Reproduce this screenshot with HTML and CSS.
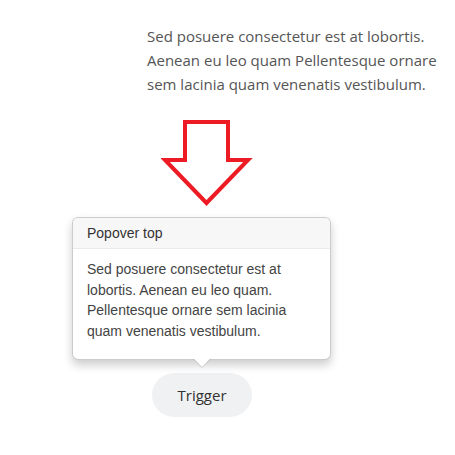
FILE: index.html
```html
<!DOCTYPE html>
<html lang="en">
<head>
    <meta charset="UTF-8">
    <meta name="viewport" content="width=device-width, initial-scale=1.0">
    <title>Popover top</title>
    <link rel="stylesheet" href="styles.css">
</head>
<body>
    <div class="page">
        <p class="intro">Sed posuere consectetur est at lobortis. Aenean eu leo quam Pellentesque ornare sem lacinia quam venenatis vestibulum.</p>

        <svg class="down-arrow" width="92" height="90" viewBox="0 0 92 90">
            <polygon points="24,4 67,4 67,42 87,42 45.5,85 4,42 24,42" fill="none" stroke="#ed1c24" stroke-width="4"/>
        </svg>

        <div class="popover">
            <div class="popover-title">Popover top</div>
            <div class="popover-content">Sed posuere consectetur est at lobortis. Aenean eu leo quam. Pellentesque ornare sem lacinia quam venenatis vestibulum.</div>
        </div>

        <button class="trigger">Trigger</button>
    </div>
</body>
</html>
```

FILE: styles.css
```css
* {
    margin: 0;
    padding: 0;
    box-sizing: border-box;
}

body {
    background: #fff;
    font-family: "Open Sans", "Noto Sans", sans-serif;
}

.page {
    display: flex;
    flex-direction: column;
    align-items: flex-start;
    padding-top: 24px;
}

.intro {
    margin-left: 147px;
    width: 300px;
    font-size: 15px;
    line-height: 24px;
    color: #555;
}

.down-arrow {
    display: block;
    margin: 22px 0 0 161px;
}

.popover {
    position: relative;
    margin: 9px 0 0 72px;
    width: 259px;
    background: #fff;
    border: 1px solid rgba(0,0,0,0.2);
    border-radius: 6px;
    box-shadow: 0 5px 10px rgba(0,0,0,0.2);
    font-family: "Liberation Sans", Arial, sans-serif;
    font-size: 14px;
    color: #333;
}

.popover::after {
    content: "";
    position: absolute;
    left: 50%;
    bottom: -8px;
    margin-left: -8px;
    border-width: 8px 8px 0;
    border-style: solid;
    border-color: #fff transparent transparent;
}

.popover::before {
    content: "";
    position: absolute;
    left: 50%;
    bottom: -9px;
    margin-left: -9px;
    border-width: 9px 9px 0;
    border-style: solid;
    border-color: rgba(0,0,0,0.15) transparent transparent;
}

.popover-title {
    padding: 8px 14px;
    line-height: 14px;
    background: #f7f7f7;
    border-bottom: 1px solid #ebebeb;
    border-radius: 5px 5px 0 0;
}

.popover-content {
    padding: 10px 14px 18px;
    line-height: 20.6px;
    color: #444;
}

.trigger {
    margin: 13px 0 0 152px;
    width: 100px;
    height: 44px;
    border: none;
    border-radius: 22px;
    background: #f0f1f3;
    font-family: "Open Sans", "Noto Sans", sans-serif;
    font-size: 15px;
    color: #333;
    cursor: pointer;
}
```
